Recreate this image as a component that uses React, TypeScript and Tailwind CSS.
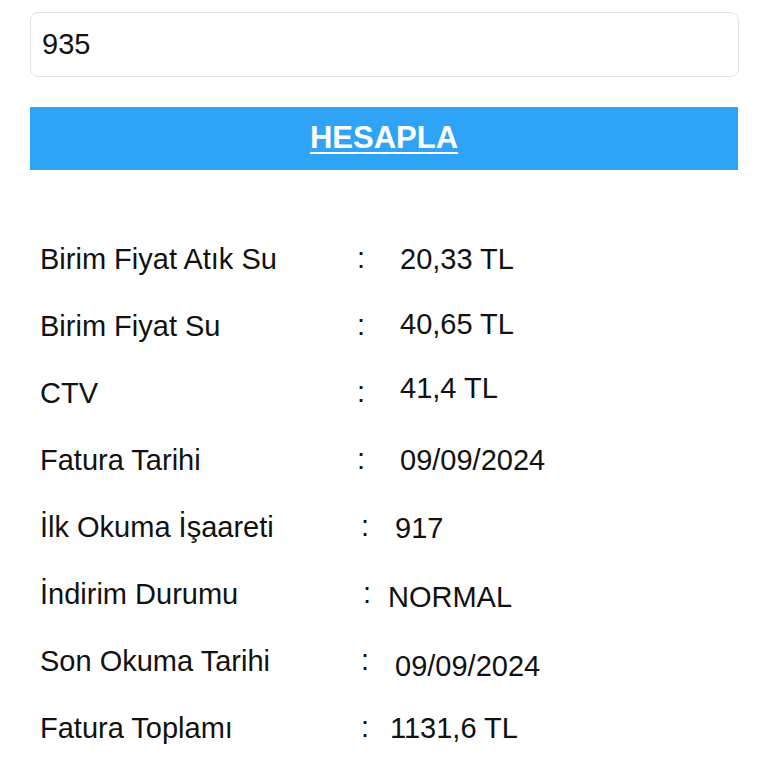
const rows = [
  { label: "Birim Fiyat Atık Su", value: "20,33 TL", colon: "ml-0", val: "ml-[35px]", dy: "translate-y-0" },
  { label: "Birim Fiyat Su", value: "40,65 TL", colon: "ml-0", val: "ml-[35px]", dy: "-translate-y-[2px]" },
  { label: "CTV", value: "41,4 TL", colon: "ml-0", val: "ml-[35px]", dy: "-translate-y-[5px]" },
  { label: "Fatura Tarihi", value: "09/09/2024", colon: "ml-0", val: "ml-[35px]", dy: "translate-y-0" },
  { label: "İlk Okuma İşaareti", value: "917", colon: "ml-[4px]", val: "ml-[26px]", dy: "translate-y-[1px]" },
  { label: "İndirim Durumu", value: "NORMAL", colon: "ml-[6px]", val: "ml-[17px]", dy: "translate-y-[3px]" },
  { label: "Son Okuma Tarihi", value: "09/09/2024", colon: "ml-[4px]", val: "ml-[26px]", dy: "translate-y-[5px]" },
  { label: "Fatura Toplamı", value: "1131,6 TL", colon: "ml-[4px]", val: "ml-[21px]", dy: "translate-y-0" },
];

export default function App() {
  return (
    <div className="w-[768px] h-[768px] bg-white overflow-hidden px-[30px] pt-[12px] text-[#111] font-['Liberation_Sans',Arial,sans-serif]">
      {/* kutu */}
      <div className="h-[65px] w-[709px] rounded-[8px] border border-[#e2e2e2] flex items-center pl-[11px] text-[29px]">
        935
      </div>

      <button className="mt-[30px] h-[63px] w-[708px] bg-[#2fa3f6] flex items-center justify-center">
        <span className="text-white font-bold text-[31px] underline underline-offset-[4px] decoration-[2px]">HESAPLA</span>
      </button>

      <div className="mt-[56px] pl-[10px]">
        {rows.map((r) => (
          <div key={r.label} className="h-[67px] flex items-center text-[29px]">
            <span className="w-[317px] shrink-0">{r.label}</span>
            <span className={`${r.colon} w-[8px] -translate-y-[1px]`}>:</span>
            <span className={`${r.val} ${r.dy}`}>{r.value}</span>
          </div>
        ))}
      </div>
    </div>
  );
}
